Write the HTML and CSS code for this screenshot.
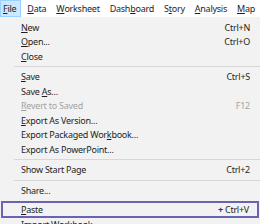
FILE: index.html
```html
<!DOCTYPE html>
<html>
<head>
<meta charset="utf-8">
<link rel="stylesheet" href="styles.css">
</head>
<body>
<div class="menubar">
  <span class="top active"><u>F</u>ile</span>
  <span class="top"><u>D</u>ata</span>
  <span class="top"><u>W</u>orksheet</span>
  <span class="top">Dash<u>b</u>oard</span>
  <span class="top">S<u>t</u>ory</span>
  <span class="top"><u>A</u>nalysis</span>
  <span class="top"><u>M</u>ap</span>
</div>
<div class="dropdown">
  <div class="item"><span><u>N</u>ew</span><span class="key">Ctrl+N</span></div>
  <div class="item"><span><u>O</u>pen...</span><span class="key">Ctrl+O</span></div>
  <div class="item"><span><u>C</u>lose</span></div>
  <div class="sep"></div>
  <div class="item"><span><u>S</u>ave</span><span class="key">Ctrl+S</span></div>
  <div class="item"><span>Save <u>A</u>s...</span></div>
  <div class="item disabled"><span><u>R</u>evert to Saved</span><span class="key">F12</span></div>
  <div class="item"><span><u>E</u>xport As Version...</span></div>
  <div class="item"><span>Export Packaged Wor<u>k</u>book...</span></div>
  <div class="item"><span>Export As PowerPoint...</span></div>
  <div class="sep"></div>
  <div class="item"><span>Show Start Page</span><span class="key">Ctrl+2</span></div>
  <div class="sep"></div>
  <div class="item"><span>Share...</span></div>
  <div class="item boxed"><span><u>P</u>aste</span><span class="key"><span class="plus">+</span> Ctrl+V</span></div>
  <div class="item"><span>Import Workbook...</span></div>
</div>
</body>
</html>
```
FILE: styles.css
```css
html, body {
  margin: 0;
  padding: 0;
  width: 260px;
  height: 224px;
  overflow: hidden;
  background: #f2f2f2;
  font-family: "Noto Sans", "Open Sans", sans-serif;
  font-size: 9px;
  letter-spacing: -0.25px;
  color: #1e1e1e;
}
u {
  text-decoration: underline;
  text-underline-offset: 1px;
}
.menubar {
  display: flex;
  height: 17px;
  background: #ffffff;
}
.top {
  display: flex;
  align-items: center;
  padding: 0 4px;
  height: 17px;
  box-sizing: border-box;
  border: 1px solid transparent;
}
.top.active {
  background: #cce8ff;
  border-color: #99d1ff;
  width: 22px;
  padding: 0 2px;
  margin-right: 1px;
}
.dropdown {
  display: flex;
  flex-direction: column;
  padding-top: 3px;
}
.item {
  display: flex;
  justify-content: space-between;
  align-items: center;
  flex: none;
  height: 14.5px;
  padding: 0 10px 0 21px;
  box-sizing: border-box;
}
.disabled {
  color: #a3a3a3;
}
.sep {
  flex: none;
  height: 1px;
  background: #d7d7d7;
  margin: 2.5px 0 2.5px 14px;
}
.boxed {
  border: 2px solid #6a63b5;
  margin: 3px 1px 0;
  padding: 0 8px 0 18px;
  height: 17px;
}
.plus {
  color: #2a2a8a;
  font-weight: bold;
}
```
